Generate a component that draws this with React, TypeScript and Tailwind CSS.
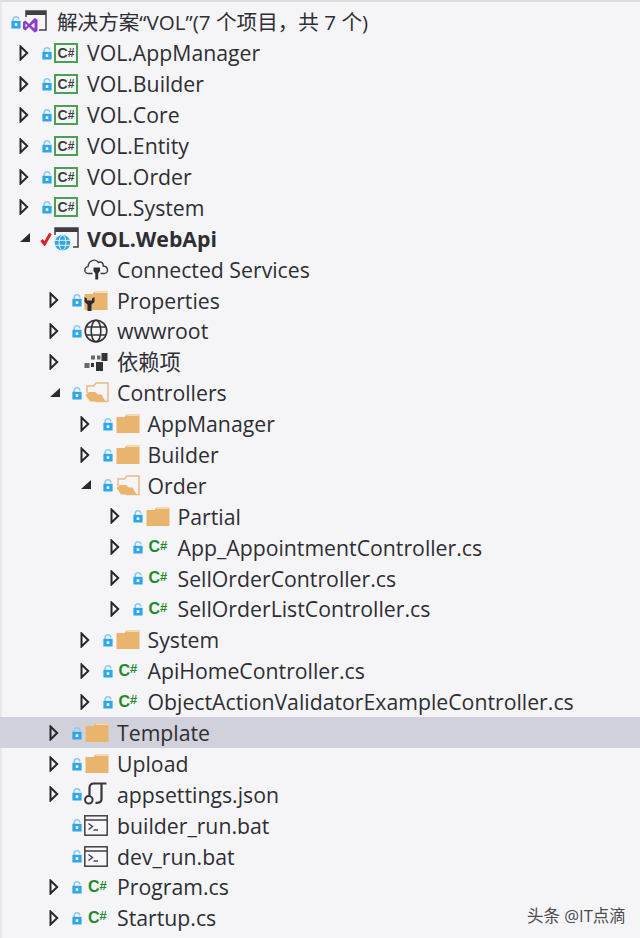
import React from "react";

const PAD = ["pl-[19px]", "pl-[49px]", "pl-[79.5px]", "pl-[109.5px]"];

function Closed() {
  return (
    <svg width="10" height="16" viewBox="0 0 10 16" className="block">
      <path d="M1.5 1.5 L8.2 8 L1.5 14.5 Z" fill="none" stroke="#26262c" strokeWidth="2" strokeLinejoin="miter" />
    </svg>
  );
}
function Open() {
  return (
    <svg width="12" height="12" viewBox="0 0 12 12" className="block">
      <path d="M11 1 L11 10 L1 10 Z" fill="#2a2a30" />
    </svg>
  );
}
function Lock() {
  return (
    <svg width="10" height="14" viewBox="0 0 10 14" className="block">
      <path d="M2.2 6 V4.4 C2.2 0.8 7.8 0.8 7.8 4.4" fill="none" stroke="#8ccbef" strokeWidth="1.6" />
      <rect x="0.4" y="5.8" width="9.2" height="7.7" fill="#2fa6e8" />
      <rect x="3.7" y="8.2" width="2.6" height="2.8" fill="#e6f4fc" />
    </svg>
  );
}
function CsProj() {
  return (
    <div className="w-[24px] h-[20px] border-2 border-[#4d9e58] flex items-center justify-center bg-[#f4f5f5]">
      <span className="font-['Liberation_Sans',sans-serif] font-bold text-[14px] leading-none text-[#3d3d42]">C</span>
      <span className="font-['Liberation_Sans',sans-serif] font-bold text-[12px] leading-none text-[#3d3d42]">#</span>
    </div>
  );
}
function CsFile() {
  return (
    <div className="w-[25px] flex items-center pl-[4px] h-[20px]">
      <span className="font-['Liberation_Sans',sans-serif] font-bold text-[16px] leading-none text-[#1f8a2c]">C</span>
      <span className="font-['Liberation_Sans',sans-serif] font-bold text-[13px] leading-none text-[#1f8a2c] -translate-y-[2px]">#</span>
    </div>
  );
}
function FolderClosed() {
  return (
    <svg width="24" height="21" viewBox="0 0 24 21" className="block ml-[1px]">
      <path d="M0.5 4 H8.5 L10.5 1.5 H23.5 V20 H0.5 Z" fill="#e9b46e" />
      <path d="M10.5 1.5 H23.5 V3 H11 Z" fill="#f4d9b2" />
    </svg>
  );
}
function FolderOpen() {
  return (
    <svg width="24" height="21" viewBox="0 0 24 21" className="block ml-[1px]">
      <path d="M2 11 V4 H8.5 L11 1 H23 V19.5 H10" fill="none" stroke="#e6bb85" strokeWidth="1.5" />
      <path d="M0.5 13 L4 10 H10 L13 12.5 H16.5 L20.5 19.5 H5 Z" fill="#e9b46e" />
    </svg>
  );
}
function Props() {
  return (
    <svg width="24" height="21" viewBox="0 0 24 21" className="block">
      <path d="M0.5 4 H8.5 L10.5 1.5 H23.5 V20 H0.5 Z" fill="#e9b46e" />
      <path d="M10.5 1.5 H23.5 V3 H11 Z" fill="#f6e0c2" />
      <path d="M0.5 7 V12 L3.5 14.5 V21 H7.5 V14.5 L10.5 12 V7 L8 8.5 V10.5 H3 V8.5 Z" fill="#2b2b31" />
    </svg>
  );
}
function Globe() {
  return (
    <svg width="24" height="24" viewBox="0 0 24 24" className="block">
      <g fill="none" stroke="#333338" strokeWidth="1.6">
        <circle cx="12" cy="12" r="10.8" />
        <ellipse cx="12" cy="12" rx="4.8" ry="10.8" />
        <path d="M2 8 H22 M2 16 H22" />
      </g>
    </svg>
  );
}
function Cloud() {
  return (
    <svg width="25" height="22" viewBox="0 0 25 22" className="block">
      <path d="M8.5 15.5 H4.5 C-0.5 15.5 0 9 4 8.6 C4.5 2.5 11 0 14.5 4.5 C17 3 19.8 5 19.2 8 C24.8 8.5 25 15.5 20 15.5 H16.5" fill="none" stroke="#3a3a40" strokeWidth="1.4" />
      <path d="M9.5 9.5 H16 V13 L14.2 15.5 V21.5 H11.3 V15.5 L9.5 13 Z" fill="#2f2f35" />
    </svg>
  );
}
function Deps() {
  return (
    <svg width="24" height="20" viewBox="0 0 24 20" className="block">
      <g fill="#33333a">
        <rect x="0.5" y="11" width="5" height="5" fill="#66666c" />
        <rect x="7" y="3.5" width="4" height="4" fill="#66666c" />
        <rect x="7" y="11" width="3" height="4" />
        <rect x="13" y="3.5" width="3.5" height="4" fill="#66666c" />
        <rect x="12" y="10" width="7" height="9" />
        <rect x="17.5" y="1" width="6" height="8" />
      </g>
    </svg>
  );
}
function Json() {
  return (
    <svg width="24" height="24" viewBox="0 0 24 24" className="block">
      <path d="M5.5 13 V6 C5.5 2.5 7.5 1.5 10 1.5 H22.5 M17.5 1.5 V17 C17.5 19.5 16 20.8 13 20.8 H11.5" fill="none" stroke="#35353b" strokeWidth="2.2" />
      <circle cx="4.8" cy="17.8" r="3.8" fill="none" stroke="#35353b" strokeWidth="2" />
    </svg>
  );
}
function Bat() {
  return (
    <svg width="24" height="21" viewBox="0 0 24 21" className="block">
      <rect x="0.8" y="0.8" width="22.4" height="19.4" fill="#f7f7f8" stroke="#3e3e44" strokeWidth="1.5" />
      <path d="M1 5 H23" stroke="#3e3e44" strokeWidth="1.5" />
      <path d="M4.5 8.5 L8.5 11.5 L4.5 14.5" fill="none" stroke="#3e3e44" strokeWidth="1.4" />
      <path d="M9.5 15 H14" stroke="#3e3e44" strokeWidth="1.4" />
    </svg>
  );
}
function WebProject() {
  return (
    <svg width="25" height="26" viewBox="0 0 25 26" className="block">
      <path d="M1 10 V3 H24 V22 H19" fill="none" stroke="#3e3e44" strokeWidth="1.5" />
      <path d="M1 3 H24 V7 H1 Z" fill="#3e3e44" />
      <circle cx="8.5" cy="17.8" r="7.8" fill="#35a5df" />
      <g fill="none" stroke="#dff2fb" strokeWidth="1">
        <ellipse cx="8.5" cy="17.8" rx="3.4" ry="7.5" />
        <path d="M1 15.3 H16 M1 20.3 H16" />
      </g>
    </svg>
  );
}
function Solution() {
  return (
    <svg width="25" height="24" viewBox="0 0 25 24" className="block">
      <path d="M4 7 V1 H24 V20 H17" fill="none" stroke="#3e3e44" strokeWidth="1.5" />
      <path d="M4 1 H24 V5 H4 Z" fill="#3e3e44" />
      <path d="M1 12 L3.5 10.5 L7 14 L12.5 8 L15.5 9.5 V21 L12.5 22.5 L7 17 L3.5 20.5 L1 19 Z M3.5 13.5 V17.5 L5.5 15.5 Z M9 15.5 L12.5 18.5 V12.5 Z" fill="#8a3fc4" fillRule="evenodd" />
    </svg>
  );
}

const icons: Record<string, React.ReactNode> = {
  proj: <CsProj />, cs: <CsFile />, fc: <FolderClosed />, fo: <FolderOpen />, props: <Props />,
  globe: <Globe />, cloud: <Cloud />, deps: <Deps />, json: <Json />, bat: <Bat />, web: <WebProject />,
};

type Row = { l: number; a: "c" | "o" | ""; i: string; t: string; lock?: "lock" | "check" | ""; b?: boolean; hl?: boolean };

const rows: Row[] = [
  { l: 0, a: "c", i: "proj", t: "VOL.AppManager" },
  { l: 0, a: "c", i: "proj", t: "VOL.Builder" },
  { l: 0, a: "c", i: "proj", t: "VOL.Core" },
  { l: 0, a: "c", i: "proj", t: "VOL.Entity" },
  { l: 0, a: "c", i: "proj", t: "VOL.Order" },
  { l: 0, a: "c", i: "proj", t: "VOL.System" },
  { l: 0, a: "o", i: "web", t: "VOL.WebApi", lock: "check", b: true },
  { l: 1, a: "", i: "cloud", t: "Connected Services", lock: "" },
  { l: 1, a: "c", i: "props", t: "Properties" },
  { l: 1, a: "c", i: "globe", t: "wwwroot" },
  { l: 1, a: "c", i: "deps", t: "依赖项", lock: "" },
  { l: 1, a: "o", i: "fo", t: "Controllers" },
  { l: 2, a: "c", i: "fc", t: "AppManager" },
  { l: 2, a: "c", i: "fc", t: "Builder" },
  { l: 2, a: "o", i: "fo", t: "Order" },
  { l: 3, a: "c", i: "fc", t: "Partial" },
  { l: 3, a: "c", i: "cs", t: "App_AppointmentController.cs" },
  { l: 3, a: "c", i: "cs", t: "SellOrderController.cs" },
  { l: 3, a: "c", i: "cs", t: "SellOrderListController.cs" },
  { l: 2, a: "c", i: "fc", t: "System" },
  { l: 2, a: "c", i: "cs", t: "ApiHomeController.cs" },
  { l: 2, a: "c", i: "cs", t: "ObjectActionValidatorExampleController.cs" },
  { l: 1, a: "c", i: "fc", t: "Template", hl: true },
  { l: 1, a: "c", i: "fc", t: "Upload" },
  { l: 1, a: "c", i: "json", t: "appsettings.json" },
  { l: 1, a: "", i: "bat", t: "builder_run.bat" },
  { l: 1, a: "", i: "bat", t: "dev_run.bat" },
  { l: 1, a: "c", i: "cs", t: "Program.cs" },
  { l: 1, a: "c", i: "cs", t: "Startup.cs" },
];

function TreeRow({ r }: { r: Row }) {
  const mark = r.lock ?? "lock";
  return (
    <div className={`h-[30.9px] flex items-center ${PAD[r.l]} ${r.hl ? "bg-[#d0d1da]" : ""}`}>
      <div className="w-[22px] shrink-0 flex items-center">
        {r.a === "c" ? <Closed /> : r.a === "o" ? <Open /> : null}
      </div>
      <div className="w-[13px] shrink-0 flex items-center">
        {mark === "lock" ? <div className="translate-x-px"><Lock /></div> : mark === "check" ? (
          <svg width="12" height="14" viewBox="0 0 12 14" className="block -translate-x-px translate-y-[1px]">
            <path d="M1.5 8 L4.5 12 L10.5 1.5" fill="none" stroke="#d8222a" strokeWidth="3" />
          </svg>
        ) : null}
      </div>
      <div className="w-[25px] shrink-0 flex items-center justify-start">{icons[r.i]}</div>
      <span className={`ml-[8px] whitespace-nowrap text-[21.25px] leading-none text-[#2e2e34] ${r.b ? "font-bold" : ""}`}>{r.t}</span>
    </div>
  );
}

export default function App() {
  return (
    <div className="relative w-[640px] h-[938px] bg-[#f5f5f7] border-t-2 border-l-2 border-t-[#dcdce0] border-l-[#e8e8ec] font-['Open_Sans','Noto_Sans_CJK_SC',sans-serif]">
      <div className="-ml-[2px] pt-[4.7px]">
        <div className="h-[30.9px] flex items-center pl-[11px]">
          <div className="w-[11px] shrink-0 flex items-center"><Lock /></div>
          <div className="w-[25px] shrink-0 flex items-center"><Solution /></div>
          <span className="ml-[10px] whitespace-nowrap text-[20.6px] leading-none text-[#2e2e34]">解决方案“VOL”(7 个项目，共 7 个)</span>
        </div>
        {rows.map((r, i) => <TreeRow key={i} r={r} />)}
      </div>
      <span className="absolute left-[525px] bottom-[14px] text-[16.5px] leading-none text-[#4a4a4f] whitespace-nowrap">头条 @IT点滴</span>
    </div>
  );
}
